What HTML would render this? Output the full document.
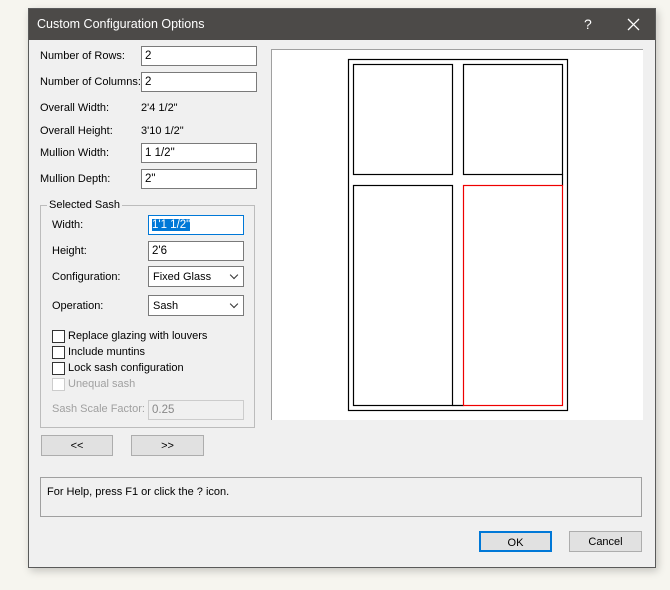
<!DOCTYPE html>
<html><head><style>
*{box-sizing:border-box;margin:0;padding:0}
body{width:670px;height:590px;background:#f6f5ef;position:relative;overflow:hidden;font-family:"Liberation Sans",sans-serif;font-size:11px;color:#000}
.dlg{position:absolute;left:28px;top:8px;width:628px;height:560px;background:#f0f0f0;border:1px solid #5a5a5a;box-shadow:2px 3px 8px rgba(0,0,0,.2)}
.tb{position:absolute;left:0;top:0;width:100%;height:31px;background:#4c4a48;color:#fff;font-size:12.5px}
.a{position:absolute;white-space:nowrap}
.in{position:absolute;background:#fff;border:1px solid #7a7a7a;height:20px;padding:3px 0 0 3px;font-size:11.5px}
.sel{position:absolute;background:#fff;border:1px solid #7a7a7a;height:21px;padding:4px 0 0 4px}
.sel:after{content:"";position:absolute;right:6px;top:5px;width:5px;height:5px;border-right:1px solid #333;border-bottom:1px solid #333;transform:rotate(45deg)}
.cb{position:absolute;width:13px;height:13px;border:1px solid #333;background:#fff}
.btn{position:absolute;background:#e1e1e1;border:1px solid #adadad;text-align:center;height:21px;padding-top:4px}
</style></head><body>
<div class="dlg">
<div class="tb"><span class="a" style="left:8px;top:8px">Custom Configuration Options</span><span class="a" style="left:555px;top:7px;font-size:14px">?</span>
<svg class="a" style="left:598px;top:9px" width="13" height="13"><path d="M1 1L12 12M12 1L1 12" stroke="#fff" stroke-width="1.3"/></svg></div>
</div>
<span class="a" style="left:40px;top:50px">Number of Rows:</span><div class="in" style="left:141px;top:46px;width:116px">2</div>
<span class="a" style="left:40px;top:76px">Number of Columns:</span><div class="in" style="left:141px;top:72px;width:116px">2</div>
<span class="a" style="left:40px;top:102px">Overall Width:</span><span class="a" style="left:141px;top:102px">2'4 1/2"</span>
<span class="a" style="left:40px;top:125px">Overall Height:</span><span class="a" style="left:141px;top:125px">3'10 1/2"</span>
<span class="a" style="left:40px;top:147px">Mullion Width:</span><div class="in" style="left:141px;top:143px;width:116px">1 1/2"</div>
<span class="a" style="left:40px;top:173px">Mullion Depth:</span><div class="in" style="left:141px;top:169px;width:116px">2"</div>
<div class="a" style="left:40px;top:205px;width:215px;height:223px;border:1px solid #bcbcbc"></div>
<span class="a" style="left:47px;top:199px;background:#f0f0f0;padding:0 2px">Selected Sash</span>
<span class="a" style="left:52px;top:219px">Width:</span><div class="in" style="left:148px;top:215px;width:96px;border-color:#0078d7"><span style="background:#0078d7;color:#fff">1'1 1/2"</span></div>
<span class="a" style="left:52px;top:245px">Height:</span><div class="in" style="left:148px;top:241px;width:96px">2'6</div>
<span class="a" style="left:52px;top:271px">Configuration:</span><div class="sel" style="left:148px;top:266px;width:96px">Fixed Glass</div>
<span class="a" style="left:52px;top:300px">Operation:</span><div class="sel" style="left:148px;top:295px;width:96px">Sash</div>
<div class="cb" style="left:52px;top:330px"></div><span class="a" style="left:68px;top:330px">Replace glazing with louvers</span>
<div class="cb" style="left:52px;top:346px"></div><span class="a" style="left:68px;top:346px">Include muntins</span>
<div class="cb" style="left:52px;top:362px"></div><span class="a" style="left:68px;top:362px">Lock sash configuration</span>
<div class="cb" style="left:52px;top:378px;border-color:#ccc"></div><span class="a" style="left:68px;top:378px;color:#a0a0a0">Unequal sash</span>
<span class="a" style="left:52px;top:403px;color:#a0a0a0">Sash Scale Factor:</span><div class="in" style="left:148px;top:400px;width:96px;background:#f0f0f0;border-color:#ccc;color:#888">0.25</div>
<div class="btn" style="left:41px;top:435px;width:72px">&lt;&lt;</div>
<div class="btn" style="left:131px;top:435px;width:73px">&gt;&gt;</div>
<div class="a" style="left:271px;top:49px;width:372px;height:371px;background:#fff;border-top:1px solid #a0a0a0;border-left:1px solid #a0a0a0"></div>
<svg class="a" style="left:0;top:0" width="670" height="590" fill="none" stroke-width="1.2">
<rect x="348.5" y="59.5" width="219" height="351" stroke="#000"/>
<rect x="353.5" y="64.5" width="99" height="110" stroke="#000"/>
<rect x="463.5" y="64.5" width="99" height="110" stroke="#000"/>
<rect x="353.5" y="185.5" width="99" height="220" stroke="#000"/>
<path d="M452.5 405.5H463.5M562.5 174.5V185.5" stroke="#000"/>
<rect x="463.5" y="185.5" width="99" height="220" stroke="#e00"/>
</svg>
<div class="a" style="left:40px;top:477px;width:602px;height:40px;border:1px solid #a0a0a0"></div>
<span class="a" style="left:47px;top:486px">For Help, press F1 or click the ? icon.</span>
<div class="btn" style="left:479px;top:531px;width:73px;border:2px solid #0078d7">OK</div>
<div class="btn" style="left:569px;top:531px;width:73px">Cancel</div>
</body></html>
